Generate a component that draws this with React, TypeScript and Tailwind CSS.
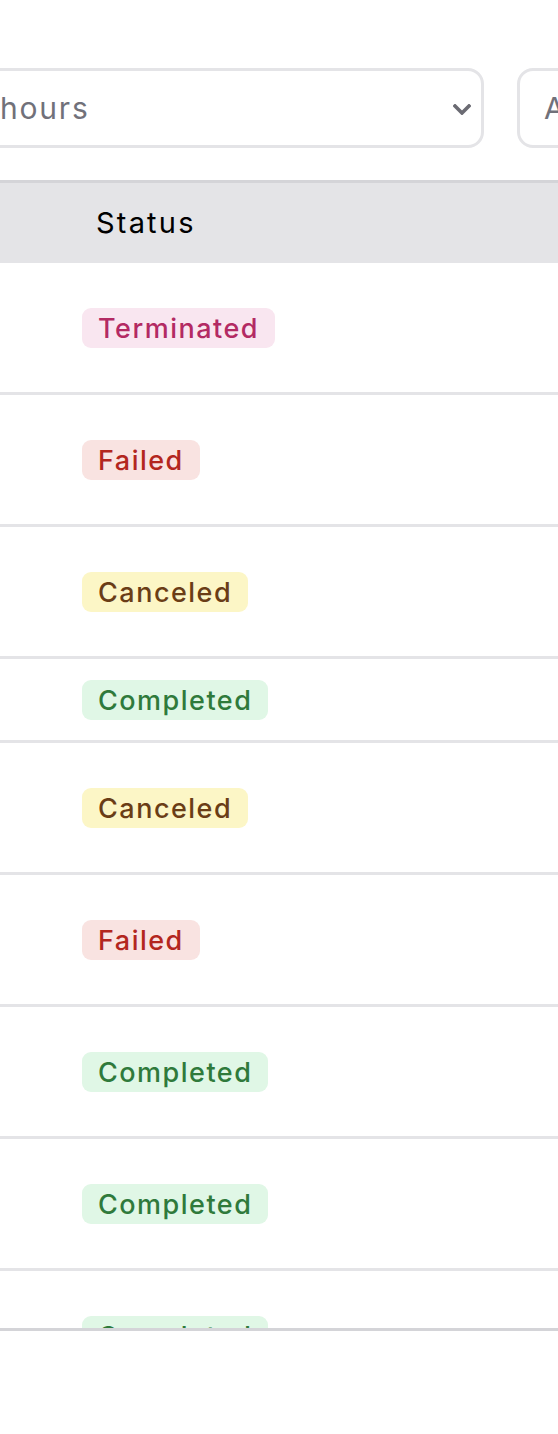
import React from 'react';

type Status = 'Terminated' | 'Failed' | 'Canceled' | 'Completed';

const badgeStyles: Record<Status, string> = {
  Terminated: 'bg-[#f9e6f0] text-[#b32a63]',
  Failed: 'bg-[#f9e3e1] text-[#b3261e]',
  Canceled: 'bg-[#fcf6c6] text-[#6a3d16]',
  Completed: 'bg-[#e0f7e6] text-[#2f7a3b]',
};

const rows: { status: Status; short?: boolean }[] = [
  { status: 'Terminated' },
  { status: 'Failed' },
  { status: 'Canceled' },
  { status: 'Completed', short: true },
  { status: 'Canceled' },
  { status: 'Failed' },
  { status: 'Completed' },
  { status: 'Completed' },
  { status: 'Completed' },
];

function Badge({ status }: { status: Status }) {
  return (
    <span
      className={`inline-flex h-[40px] items-center rounded-[9px] px-[16px] pt-[3px] text-[27px] font-medium tracking-[1.5px] ${badgeStyles[status]}`}
    >
      {status}
    </span>
  );
}

export default function App() {
  return (
    <div className="h-[1434px] w-[558px] overflow-hidden bg-white font-['Inter',sans-serif]">
      <div className="flex gap-[33px] pt-[68px]">
        <div className="relative ml-[-200px] flex h-[80px] w-[684px] shrink-0 items-center rounded-[16px] border-[3px] border-[#e4e4e7] bg-white text-[30px] tracking-[1.8px] text-[#71717a]">
          <span className="w-[197px] shrink-0 whitespace-pre text-right">Last 24 </span>
          <span>hours</span>
          <svg
            className="absolute right-[10px] top-[33px]"
            width="18"
            height="11"
            viewBox="0 0 18 11"
            fill="none"
          >
            <path d="M2 2l7 7 7-7" stroke="#6b6b73" strokeWidth="3.6" strokeLinecap="square" />
          </svg>
        </div>
        <div className="flex h-[80px] w-[300px] shrink-0 items-center rounded-[16px] border-[3px] border-[#e4e4e7] bg-white pl-[24px] text-[30px] tracking-[1.8px] text-[#71717a]">
          All statuses
        </div>
      </div>

      <div className="mt-[32px] h-[1151px] overflow-hidden border-y-[3px] border-[#d4d4d8]">
        <div className="flex h-[80px] items-center bg-[#e4e4e7] pl-[96px] text-[29px] tracking-[2.2px] text-black">
          Status
        </div>
        {rows.map((row, i) => (
          <div
            key={i}
            className={`flex items-center border-b-[3px] border-[#e4e4e7] pl-[82px] ${row.short ? 'h-[84px]' : 'h-[132px]'}`}
          >
            <Badge status={row.status} />
          </div>
        ))}
      </div>
    </div>
  );
}
